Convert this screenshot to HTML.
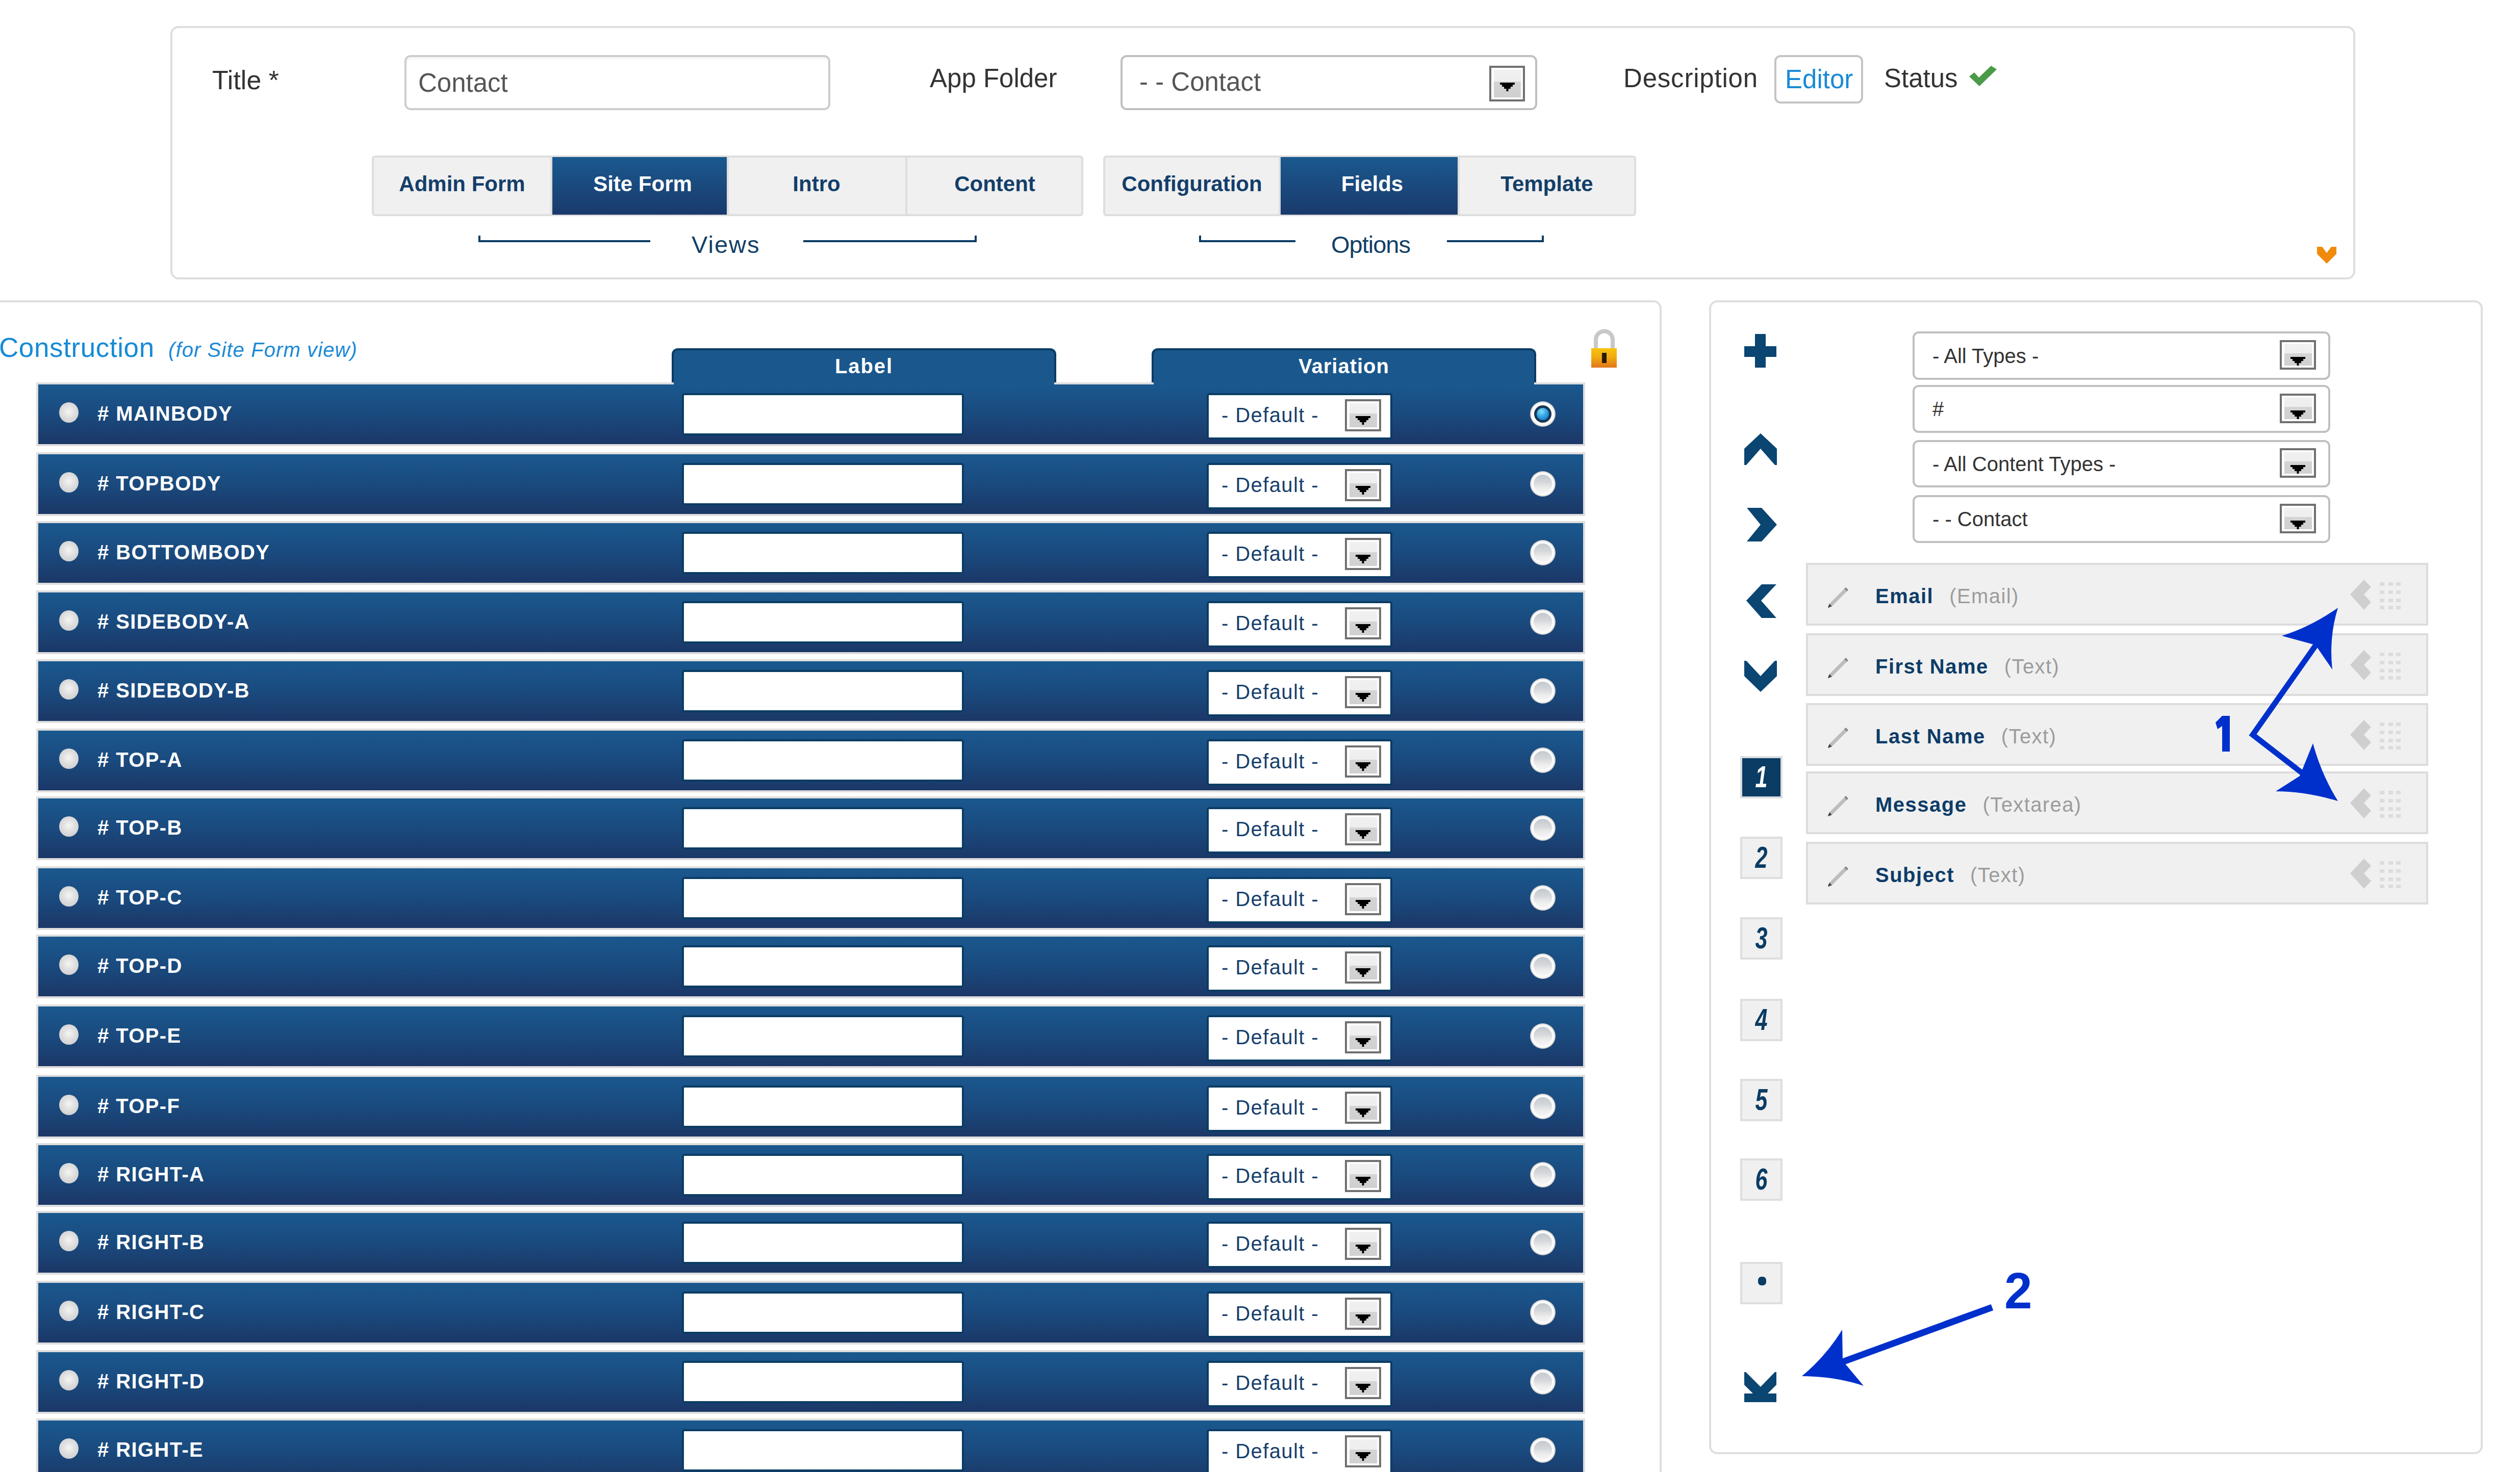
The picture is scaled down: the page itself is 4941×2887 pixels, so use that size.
<!DOCTYPE html>
<html><head><meta charset="utf-8"><title>Form</title>
<style>
html,body{margin:0;padding:0;}
body{width:4941px;height:2887px;overflow:hidden;background:#fff;position:relative;font-family:"Liberation Sans", sans-serif;}
.r{position:absolute;}
.t{position:absolute;white-space:nowrap;line-height:1;}
</style></head><body>

<div class="r" style="left:334px;top:51px;width:4284px;height:497px;border:4px solid #dedede;border-radius:16px;box-sizing:border-box;background:#fff"></div>
<div class="t" style="left:416px;top:131.0px;font-size:52px;color:#333;font-weight:normal;font-style:normal;">Title *</div>
<div class="r" style="left:793px;top:108px;width:835px;height:108px;border:4px solid #cdcdcd;border-radius:12px;box-sizing:border-box;background:#fff;box-shadow:inset 0 4px 4px rgba(0,0,0,0.04)"></div>
<div class="t" style="left:820px;top:136.8px;font-size:51px;color:#555;font-weight:normal;font-style:normal;">Contact</div>
<div class="t" style="left:1823px;top:127.8px;font-size:51px;color:#333;font-weight:normal;font-style:normal;">App Folder</div>
<div class="r" style="left:2197px;top:108px;width:817px;height:108px;border:4px solid #c0c0c0;border-radius:12px;box-sizing:border-box;background:#fff"></div>
<div class="t" style="left:2234px;top:134.8px;font-size:51px;color:#555;font-weight:normal;font-style:normal;">- - Contact</div>
<div class="r" style="left:2920px;top:129px;width:70px;height:70px;border:4px solid #707070;box-sizing:border-box;background:#fdfdfd"></div>
<div class="r" style="left:2929px;top:137px;width:53px;height:54px;background:linear-gradient(#f0f0f0 0%,#eeeeee 43%,#d4d4d4 43%,#d0d0d0 100%)"></div>
<svg class="r" style="left:2940.5px;top:162px" width="29" height="17" viewBox="0 0 29 17"><path d="M0 0H29V4H25V8H21V12H16.5V17H12.5V12H8V8H4V4H0Z" fill="#000"/></svg>
<div class="t" style="left:3183px;top:127.8px;font-size:51px;color:#333;font-weight:normal;font-style:normal;letter-spacing:0.8px">Description</div>
<div class="r" style="left:3479px;top:108px;width:174px;height:95px;border:4px solid #c4c4c4;border-radius:12px;box-sizing:border-box;background:#fff"></div>
<div class="t" style="left:3500px;top:129.8px;font-size:51px;color:#1a8ad6;font-weight:normal;font-style:normal;">Editor</div>
<div class="t" style="left:3694px;top:127.8px;font-size:51px;color:#333;font-weight:normal;font-style:normal;">Status</div>
<svg class="r" style="left:3858px;top:126px" width="60" height="46" viewBox="0 0 60 46"><path d="M3 24 L13 16 L22 26 L46 3 L57 10 L23 43 Z" fill="#4a9a48"/></svg>
<div class="r" style="left:729px;top:305px;width:1395px;height:119px;border:4px solid #dedede;border-radius:6px;box-sizing:border-box;background:#f0f0f0"></div>
<div class="r" style="left:1079px;top:308px;width:4px;height:113px;background:#dedede"></div>
<div class="r" style="left:1425px;top:308px;width:4px;height:113px;background:#dedede"></div>
<div class="r" style="left:1775px;top:308px;width:4px;height:113px;background:#dedede"></div>
<div class="t" style="left:729px;width:354px;text-align:center;top:340.4px;font-size:42px;color:#133e6a;font-weight:bold;font-style:normal;">Admin Form</div>
<div class="r" style="left:1083px;top:308px;width:342px;height:113px;background:linear-gradient(#1a598f,#1a3a6b)"></div>
<div class="t" style="left:1089px;width:342px;text-align:center;top:340.4px;font-size:42px;color:#fff;font-weight:bold;font-style:normal;">Site Form</div>
<div class="t" style="left:1425px;width:352px;text-align:center;top:340.4px;font-size:42px;color:#133e6a;font-weight:bold;font-style:normal;">Intro</div>
<div class="t" style="left:1777px;width:347px;text-align:center;top:340.4px;font-size:42px;color:#133e6a;font-weight:bold;font-style:normal;">Content</div>
<div class="r" style="left:2163px;top:305px;width:1045px;height:119px;border:4px solid #dedede;border-radius:6px;box-sizing:border-box;background:#f0f0f0"></div>
<div class="r" style="left:2507px;top:308px;width:4px;height:113px;background:#dedede"></div>
<div class="r" style="left:2858px;top:308px;width:4px;height:113px;background:#dedede"></div>
<div class="t" style="left:2163px;width:348px;text-align:center;top:340.4px;font-size:42px;color:#133e6a;font-weight:bold;font-style:normal;">Configuration</div>
<div class="r" style="left:2511px;top:308px;width:347px;height:113px;background:linear-gradient(#1a598f,#1a3a6b)"></div>
<div class="t" style="left:2517px;width:347px;text-align:center;top:340.4px;font-size:42px;color:#fff;font-weight:bold;font-style:normal;">Fields</div>
<div class="t" style="left:2858px;width:350px;text-align:center;top:340.4px;font-size:42px;color:#133e6a;font-weight:bold;font-style:normal;">Template</div>
<div class="r" style="left:938px;top:471px;width:337px;height:4px;background:#0a3c64"></div>
<div class="r" style="left:938px;top:462px;width:4px;height:13px;background:#0a3c64"></div>
<div class="r" style="left:1575px;top:471px;width:340px;height:4px;background:#0a3c64"></div>
<div class="r" style="left:1911px;top:462px;width:4px;height:13px;background:#0a3c64"></div>
<div class="t" style="left:1356px;top:456.2px;font-size:47px;color:#123f66;font-weight:normal;font-style:normal;letter-spacing:2px">Views</div>
<div class="r" style="left:2351px;top:471px;width:189px;height:4px;background:#0a3c64"></div>
<div class="r" style="left:2351px;top:462px;width:4px;height:13px;background:#0a3c64"></div>
<div class="r" style="left:2837px;top:471px;width:190px;height:4px;background:#0a3c64"></div>
<div class="r" style="left:3023px;top:462px;width:4px;height:13px;background:#0a3c64"></div>
<div class="t" style="left:2610px;top:456.2px;font-size:47px;color:#123f66;font-weight:normal;font-style:normal;letter-spacing:-1px">Options</div>
<svg class="r" style="left:4541px;top:480px" width="42" height="40" viewBox="0 0 42 40"><path d="M2 4 L12 4 L21 16 L30 4 L40 4 L40 18 L21 37 L2 18 Z" fill="#f08a0c"/></svg>
<div class="r" style="left:-40px;top:589px;width:3298px;height:2411px;border:4px solid #dedede;border-radius:16px;box-sizing:border-box;background:#fff"></div>
<div class="t" style="left:-2px;top:655.1px;font-size:53px;color:#168bd6;font-weight:normal;font-style:normal;letter-spacing:0.6px">Construction</div>
<div class="t" style="left:330px;top:666.1px;font-size:40px;color:#1a8ad6;font-weight:normal;font-style:italic;letter-spacing:1.1px">(for Site Form view)</div>
<div class="r" style="left:1317px;top:683px;width:754px;height:77px;border:4px solid #0a3c64;border-bottom:none;border-radius:12px 12px 0 0;box-sizing:border-box;background:#1a578c"></div>
<div class="t" style="left:1317px;width:754px;text-align:center;top:698.1px;font-size:40px;color:#fff;font-weight:bold;font-style:normal;letter-spacing:1.9px">Label</div>
<div class="r" style="left:2258px;top:683px;width:754px;height:77px;border:4px solid #0a3c64;border-bottom:none;border-radius:12px 12px 0 0;box-sizing:border-box;background:#1a578c"></div>
<div class="t" style="left:2258px;width:754px;text-align:center;top:698.1px;font-size:40px;color:#fff;font-weight:bold;font-style:normal;letter-spacing:1px">Variation</div>
<svg class="r" style="left:3112px;top:640px" width="66" height="90" viewBox="0 0 66 90">
<defs><linearGradient id="lg" x1="0" y1="0" x2="0" y2="1"><stop offset="0" stop-color="#f7c40e"/><stop offset="0.5" stop-color="#f0a812"/><stop offset="1" stop-color="#e2761a"/></linearGradient></defs>
<path d="M13 44 V26 A20.5 20.5 0 0 1 54 26 V44 H46 V26 A12.5 12.5 0 0 0 21 26 V44 Z" fill="#c8c8c8"/>
<rect x="8" y="43" width="50" height="38" fill="url(#lg)"/>
<rect x="29" y="52" width="9" height="20" fill="#2a1a0a"/>
</svg>
<div class="r" style="left:71px;top:750px;width:3037px;height:125px;border:4px solid #dedede;box-sizing:border-box;background:linear-gradient(to bottom,#1a588e 0%,#1a4a7e 50%,#1b3767 100%)"></div>
<div class="r" style="left:1321px;top:750px;width:746px;height:4px;background:#1a588e"></div>
<div class="r" style="left:2262px;top:750px;width:746px;height:4px;background:#1a588e"></div>
<div class="r" style="left:116px;top:789px;width:38px;height:40px;border-radius:50%;background:radial-gradient(circle at 50% 45%,#f4f4f4 0%,#d9d9d9 55%,#c4c8cc 100%);"></div>
<div class="t" style="left:191px;top:791.1px;font-size:40px;color:#fff;font-weight:bold;font-style:normal;letter-spacing:1.4px"># MAINBODY</div>
<div class="r" style="left:1337px;top:771px;width:553px;height:83px;border:4px solid #0a3c64;border-radius:5px;box-sizing:border-box;background:#fff"></div>
<div class="r" style="left:2366px;top:771px;width:364px;height:91px;border:4px solid #0a3c64;border-radius:5px;box-sizing:border-box;background:#fff"></div>
<div class="t" style="left:2395px;top:794.1px;font-size:40px;color:#173f6c;font-weight:normal;font-style:normal;letter-spacing:1.4px">- Default -</div>
<div class="r" style="left:2637px;top:783px;width:71px;height:63px;border:4px solid #707070;box-sizing:border-box;background:#fdfdfd"></div>
<div class="r" style="left:2646px;top:791px;width:54px;height:47px;background:linear-gradient(#f0f0f0 0%,#eeeeee 43%,#d4d4d4 43%,#d0d0d0 100%)"></div>
<svg class="r" style="left:2658.0px;top:816px" width="29" height="17" viewBox="0 0 29 17"><path d="M0 0H29V4H25V8H21V12H16.5V17H12.5V12H8V8H4V4H0Z" fill="#000"/></svg>
<div class="r" style="left:3000px;top:787px;width:50px;height:50px;border-radius:50%;background:radial-gradient(circle,#fafafa 0%,#fafafa 62%,#9a9a9a 76%,#7a8a9a 100%);"></div>
<div class="r" style="left:3008px;top:795px;width:34px;height:34px;border-radius:50%;background:radial-gradient(circle,#1a3550 0%,#1a3550 100%);"></div>
<div class="r" style="left:3013px;top:800px;width:24px;height:24px;border-radius:50%;background:radial-gradient(circle at 40% 30%,#8ee0f0 0%,#40b0e8 35%,#1a88d8 70%,#1a70b8 100%);"></div>
<div class="r" style="left:71px;top:887px;width:3037px;height:125px;border:4px solid #dedede;box-sizing:border-box;background:linear-gradient(to bottom,#1a588e 0%,#1a4a7e 50%,#1b3767 100%)"></div>
<div class="r" style="left:116px;top:926px;width:38px;height:40px;border-radius:50%;background:radial-gradient(circle at 50% 45%,#f4f4f4 0%,#d9d9d9 55%,#c4c8cc 100%);"></div>
<div class="t" style="left:191px;top:928.1px;font-size:40px;color:#fff;font-weight:bold;font-style:normal;letter-spacing:1.4px"># TOPBODY</div>
<div class="r" style="left:1337px;top:908px;width:553px;height:83px;border:4px solid #0a3c64;border-radius:5px;box-sizing:border-box;background:#fff"></div>
<div class="r" style="left:2366px;top:908px;width:364px;height:91px;border:4px solid #0a3c64;border-radius:5px;box-sizing:border-box;background:#fff"></div>
<div class="t" style="left:2395px;top:931.1px;font-size:40px;color:#173f6c;font-weight:normal;font-style:normal;letter-spacing:1.4px">- Default -</div>
<div class="r" style="left:2637px;top:920px;width:71px;height:63px;border:4px solid #707070;box-sizing:border-box;background:#fdfdfd"></div>
<div class="r" style="left:2646px;top:928px;width:54px;height:47px;background:linear-gradient(#f0f0f0 0%,#eeeeee 43%,#d4d4d4 43%,#d0d0d0 100%)"></div>
<svg class="r" style="left:2658.0px;top:953px" width="29" height="17" viewBox="0 0 29 17"><path d="M0 0H29V4H25V8H21V12H16.5V17H12.5V12H8V8H4V4H0Z" fill="#000"/></svg>
<div class="r" style="left:3000px;top:924px;width:50px;height:50px;border-radius:50%;background:radial-gradient(circle,#fafafa 0%,#fafafa 62%,#9a9a9a 76%,#7a8a9a 100%);"></div>
<div class="r" style="left:3007px;top:931px;width:36px;height:36px;border-radius:50%;background:linear-gradient(#c4c9ce 0%,#d4d7da 40%,#eeeeee 75%,#f4f4f4 100%);"></div>
<div class="r" style="left:71px;top:1022px;width:3037px;height:125px;border:4px solid #dedede;box-sizing:border-box;background:linear-gradient(to bottom,#1a588e 0%,#1a4a7e 50%,#1b3767 100%)"></div>
<div class="r" style="left:116px;top:1061px;width:38px;height:40px;border-radius:50%;background:radial-gradient(circle at 50% 45%,#f4f4f4 0%,#d9d9d9 55%,#c4c8cc 100%);"></div>
<div class="t" style="left:191px;top:1063.1px;font-size:40px;color:#fff;font-weight:bold;font-style:normal;letter-spacing:1.4px"># BOTTOMBODY</div>
<div class="r" style="left:1337px;top:1043px;width:553px;height:83px;border:4px solid #0a3c64;border-radius:5px;box-sizing:border-box;background:#fff"></div>
<div class="r" style="left:2366px;top:1043px;width:364px;height:91px;border:4px solid #0a3c64;border-radius:5px;box-sizing:border-box;background:#fff"></div>
<div class="t" style="left:2395px;top:1066.1px;font-size:40px;color:#173f6c;font-weight:normal;font-style:normal;letter-spacing:1.4px">- Default -</div>
<div class="r" style="left:2637px;top:1055px;width:71px;height:63px;border:4px solid #707070;box-sizing:border-box;background:#fdfdfd"></div>
<div class="r" style="left:2646px;top:1063px;width:54px;height:47px;background:linear-gradient(#f0f0f0 0%,#eeeeee 43%,#d4d4d4 43%,#d0d0d0 100%)"></div>
<svg class="r" style="left:2658.0px;top:1088px" width="29" height="17" viewBox="0 0 29 17"><path d="M0 0H29V4H25V8H21V12H16.5V17H12.5V12H8V8H4V4H0Z" fill="#000"/></svg>
<div class="r" style="left:3000px;top:1059px;width:50px;height:50px;border-radius:50%;background:radial-gradient(circle,#fafafa 0%,#fafafa 62%,#9a9a9a 76%,#7a8a9a 100%);"></div>
<div class="r" style="left:3007px;top:1066px;width:36px;height:36px;border-radius:50%;background:linear-gradient(#c4c9ce 0%,#d4d7da 40%,#eeeeee 75%,#f4f4f4 100%);"></div>
<div class="r" style="left:71px;top:1158px;width:3037px;height:125px;border:4px solid #dedede;box-sizing:border-box;background:linear-gradient(to bottom,#1a588e 0%,#1a4a7e 50%,#1b3767 100%)"></div>
<div class="r" style="left:116px;top:1197px;width:38px;height:40px;border-radius:50%;background:radial-gradient(circle at 50% 45%,#f4f4f4 0%,#d9d9d9 55%,#c4c8cc 100%);"></div>
<div class="t" style="left:191px;top:1199.1px;font-size:40px;color:#fff;font-weight:bold;font-style:normal;letter-spacing:1.4px"># SIDEBODY-A</div>
<div class="r" style="left:1337px;top:1179px;width:553px;height:83px;border:4px solid #0a3c64;border-radius:5px;box-sizing:border-box;background:#fff"></div>
<div class="r" style="left:2366px;top:1179px;width:364px;height:91px;border:4px solid #0a3c64;border-radius:5px;box-sizing:border-box;background:#fff"></div>
<div class="t" style="left:2395px;top:1202.1px;font-size:40px;color:#173f6c;font-weight:normal;font-style:normal;letter-spacing:1.4px">- Default -</div>
<div class="r" style="left:2637px;top:1191px;width:71px;height:63px;border:4px solid #707070;box-sizing:border-box;background:#fdfdfd"></div>
<div class="r" style="left:2646px;top:1199px;width:54px;height:47px;background:linear-gradient(#f0f0f0 0%,#eeeeee 43%,#d4d4d4 43%,#d0d0d0 100%)"></div>
<svg class="r" style="left:2658.0px;top:1224px" width="29" height="17" viewBox="0 0 29 17"><path d="M0 0H29V4H25V8H21V12H16.5V17H12.5V12H8V8H4V4H0Z" fill="#000"/></svg>
<div class="r" style="left:3000px;top:1195px;width:50px;height:50px;border-radius:50%;background:radial-gradient(circle,#fafafa 0%,#fafafa 62%,#9a9a9a 76%,#7a8a9a 100%);"></div>
<div class="r" style="left:3007px;top:1202px;width:36px;height:36px;border-radius:50%;background:linear-gradient(#c4c9ce 0%,#d4d7da 40%,#eeeeee 75%,#f4f4f4 100%);"></div>
<div class="r" style="left:71px;top:1293px;width:3037px;height:125px;border:4px solid #dedede;box-sizing:border-box;background:linear-gradient(to bottom,#1a588e 0%,#1a4a7e 50%,#1b3767 100%)"></div>
<div class="r" style="left:116px;top:1332px;width:38px;height:40px;border-radius:50%;background:radial-gradient(circle at 50% 45%,#f4f4f4 0%,#d9d9d9 55%,#c4c8cc 100%);"></div>
<div class="t" style="left:191px;top:1334.1px;font-size:40px;color:#fff;font-weight:bold;font-style:normal;letter-spacing:1.4px"># SIDEBODY-B</div>
<div class="r" style="left:1337px;top:1314px;width:553px;height:83px;border:4px solid #0a3c64;border-radius:5px;box-sizing:border-box;background:#fff"></div>
<div class="r" style="left:2366px;top:1314px;width:364px;height:91px;border:4px solid #0a3c64;border-radius:5px;box-sizing:border-box;background:#fff"></div>
<div class="t" style="left:2395px;top:1337.1px;font-size:40px;color:#173f6c;font-weight:normal;font-style:normal;letter-spacing:1.4px">- Default -</div>
<div class="r" style="left:2637px;top:1326px;width:71px;height:63px;border:4px solid #707070;box-sizing:border-box;background:#fdfdfd"></div>
<div class="r" style="left:2646px;top:1334px;width:54px;height:47px;background:linear-gradient(#f0f0f0 0%,#eeeeee 43%,#d4d4d4 43%,#d0d0d0 100%)"></div>
<svg class="r" style="left:2658.0px;top:1359px" width="29" height="17" viewBox="0 0 29 17"><path d="M0 0H29V4H25V8H21V12H16.5V17H12.5V12H8V8H4V4H0Z" fill="#000"/></svg>
<div class="r" style="left:3000px;top:1330px;width:50px;height:50px;border-radius:50%;background:radial-gradient(circle,#fafafa 0%,#fafafa 62%,#9a9a9a 76%,#7a8a9a 100%);"></div>
<div class="r" style="left:3007px;top:1337px;width:36px;height:36px;border-radius:50%;background:linear-gradient(#c4c9ce 0%,#d4d7da 40%,#eeeeee 75%,#f4f4f4 100%);"></div>
<div class="r" style="left:71px;top:1429px;width:3037px;height:125px;border:4px solid #dedede;box-sizing:border-box;background:linear-gradient(to bottom,#1a588e 0%,#1a4a7e 50%,#1b3767 100%)"></div>
<div class="r" style="left:116px;top:1468px;width:38px;height:40px;border-radius:50%;background:radial-gradient(circle at 50% 45%,#f4f4f4 0%,#d9d9d9 55%,#c4c8cc 100%);"></div>
<div class="t" style="left:191px;top:1470.1px;font-size:40px;color:#fff;font-weight:bold;font-style:normal;letter-spacing:1.4px"># TOP-A</div>
<div class="r" style="left:1337px;top:1450px;width:553px;height:83px;border:4px solid #0a3c64;border-radius:5px;box-sizing:border-box;background:#fff"></div>
<div class="r" style="left:2366px;top:1450px;width:364px;height:91px;border:4px solid #0a3c64;border-radius:5px;box-sizing:border-box;background:#fff"></div>
<div class="t" style="left:2395px;top:1473.1px;font-size:40px;color:#173f6c;font-weight:normal;font-style:normal;letter-spacing:1.4px">- Default -</div>
<div class="r" style="left:2637px;top:1462px;width:71px;height:63px;border:4px solid #707070;box-sizing:border-box;background:#fdfdfd"></div>
<div class="r" style="left:2646px;top:1470px;width:54px;height:47px;background:linear-gradient(#f0f0f0 0%,#eeeeee 43%,#d4d4d4 43%,#d0d0d0 100%)"></div>
<svg class="r" style="left:2658.0px;top:1495px" width="29" height="17" viewBox="0 0 29 17"><path d="M0 0H29V4H25V8H21V12H16.5V17H12.5V12H8V8H4V4H0Z" fill="#000"/></svg>
<div class="r" style="left:3000px;top:1466px;width:50px;height:50px;border-radius:50%;background:radial-gradient(circle,#fafafa 0%,#fafafa 62%,#9a9a9a 76%,#7a8a9a 100%);"></div>
<div class="r" style="left:3007px;top:1473px;width:36px;height:36px;border-radius:50%;background:linear-gradient(#c4c9ce 0%,#d4d7da 40%,#eeeeee 75%,#f4f4f4 100%);"></div>
<div class="r" style="left:71px;top:1562px;width:3037px;height:125px;border:4px solid #dedede;box-sizing:border-box;background:linear-gradient(to bottom,#1a588e 0%,#1a4a7e 50%,#1b3767 100%)"></div>
<div class="r" style="left:116px;top:1601px;width:38px;height:40px;border-radius:50%;background:radial-gradient(circle at 50% 45%,#f4f4f4 0%,#d9d9d9 55%,#c4c8cc 100%);"></div>
<div class="t" style="left:191px;top:1603.1px;font-size:40px;color:#fff;font-weight:bold;font-style:normal;letter-spacing:1.4px"># TOP-B</div>
<div class="r" style="left:1337px;top:1583px;width:553px;height:83px;border:4px solid #0a3c64;border-radius:5px;box-sizing:border-box;background:#fff"></div>
<div class="r" style="left:2366px;top:1583px;width:364px;height:91px;border:4px solid #0a3c64;border-radius:5px;box-sizing:border-box;background:#fff"></div>
<div class="t" style="left:2395px;top:1606.1px;font-size:40px;color:#173f6c;font-weight:normal;font-style:normal;letter-spacing:1.4px">- Default -</div>
<div class="r" style="left:2637px;top:1595px;width:71px;height:63px;border:4px solid #707070;box-sizing:border-box;background:#fdfdfd"></div>
<div class="r" style="left:2646px;top:1603px;width:54px;height:47px;background:linear-gradient(#f0f0f0 0%,#eeeeee 43%,#d4d4d4 43%,#d0d0d0 100%)"></div>
<svg class="r" style="left:2658.0px;top:1628px" width="29" height="17" viewBox="0 0 29 17"><path d="M0 0H29V4H25V8H21V12H16.5V17H12.5V12H8V8H4V4H0Z" fill="#000"/></svg>
<div class="r" style="left:3000px;top:1599px;width:50px;height:50px;border-radius:50%;background:radial-gradient(circle,#fafafa 0%,#fafafa 62%,#9a9a9a 76%,#7a8a9a 100%);"></div>
<div class="r" style="left:3007px;top:1606px;width:36px;height:36px;border-radius:50%;background:linear-gradient(#c4c9ce 0%,#d4d7da 40%,#eeeeee 75%,#f4f4f4 100%);"></div>
<div class="r" style="left:71px;top:1699px;width:3037px;height:125px;border:4px solid #dedede;box-sizing:border-box;background:linear-gradient(to bottom,#1a588e 0%,#1a4a7e 50%,#1b3767 100%)"></div>
<div class="r" style="left:116px;top:1738px;width:38px;height:40px;border-radius:50%;background:radial-gradient(circle at 50% 45%,#f4f4f4 0%,#d9d9d9 55%,#c4c8cc 100%);"></div>
<div class="t" style="left:191px;top:1740.1px;font-size:40px;color:#fff;font-weight:bold;font-style:normal;letter-spacing:1.4px"># TOP-C</div>
<div class="r" style="left:1337px;top:1720px;width:553px;height:83px;border:4px solid #0a3c64;border-radius:5px;box-sizing:border-box;background:#fff"></div>
<div class="r" style="left:2366px;top:1720px;width:364px;height:91px;border:4px solid #0a3c64;border-radius:5px;box-sizing:border-box;background:#fff"></div>
<div class="t" style="left:2395px;top:1743.1px;font-size:40px;color:#173f6c;font-weight:normal;font-style:normal;letter-spacing:1.4px">- Default -</div>
<div class="r" style="left:2637px;top:1732px;width:71px;height:63px;border:4px solid #707070;box-sizing:border-box;background:#fdfdfd"></div>
<div class="r" style="left:2646px;top:1740px;width:54px;height:47px;background:linear-gradient(#f0f0f0 0%,#eeeeee 43%,#d4d4d4 43%,#d0d0d0 100%)"></div>
<svg class="r" style="left:2658.0px;top:1765px" width="29" height="17" viewBox="0 0 29 17"><path d="M0 0H29V4H25V8H21V12H16.5V17H12.5V12H8V8H4V4H0Z" fill="#000"/></svg>
<div class="r" style="left:3000px;top:1736px;width:50px;height:50px;border-radius:50%;background:radial-gradient(circle,#fafafa 0%,#fafafa 62%,#9a9a9a 76%,#7a8a9a 100%);"></div>
<div class="r" style="left:3007px;top:1743px;width:36px;height:36px;border-radius:50%;background:linear-gradient(#c4c9ce 0%,#d4d7da 40%,#eeeeee 75%,#f4f4f4 100%);"></div>
<div class="r" style="left:71px;top:1833px;width:3037px;height:125px;border:4px solid #dedede;box-sizing:border-box;background:linear-gradient(to bottom,#1a588e 0%,#1a4a7e 50%,#1b3767 100%)"></div>
<div class="r" style="left:116px;top:1872px;width:38px;height:40px;border-radius:50%;background:radial-gradient(circle at 50% 45%,#f4f4f4 0%,#d9d9d9 55%,#c4c8cc 100%);"></div>
<div class="t" style="left:191px;top:1874.1px;font-size:40px;color:#fff;font-weight:bold;font-style:normal;letter-spacing:1.4px"># TOP-D</div>
<div class="r" style="left:1337px;top:1854px;width:553px;height:83px;border:4px solid #0a3c64;border-radius:5px;box-sizing:border-box;background:#fff"></div>
<div class="r" style="left:2366px;top:1854px;width:364px;height:91px;border:4px solid #0a3c64;border-radius:5px;box-sizing:border-box;background:#fff"></div>
<div class="t" style="left:2395px;top:1877.1px;font-size:40px;color:#173f6c;font-weight:normal;font-style:normal;letter-spacing:1.4px">- Default -</div>
<div class="r" style="left:2637px;top:1866px;width:71px;height:63px;border:4px solid #707070;box-sizing:border-box;background:#fdfdfd"></div>
<div class="r" style="left:2646px;top:1874px;width:54px;height:47px;background:linear-gradient(#f0f0f0 0%,#eeeeee 43%,#d4d4d4 43%,#d0d0d0 100%)"></div>
<svg class="r" style="left:2658.0px;top:1899px" width="29" height="17" viewBox="0 0 29 17"><path d="M0 0H29V4H25V8H21V12H16.5V17H12.5V12H8V8H4V4H0Z" fill="#000"/></svg>
<div class="r" style="left:3000px;top:1870px;width:50px;height:50px;border-radius:50%;background:radial-gradient(circle,#fafafa 0%,#fafafa 62%,#9a9a9a 76%,#7a8a9a 100%);"></div>
<div class="r" style="left:3007px;top:1877px;width:36px;height:36px;border-radius:50%;background:linear-gradient(#c4c9ce 0%,#d4d7da 40%,#eeeeee 75%,#f4f4f4 100%);"></div>
<div class="r" style="left:71px;top:1970px;width:3037px;height:125px;border:4px solid #dedede;box-sizing:border-box;background:linear-gradient(to bottom,#1a588e 0%,#1a4a7e 50%,#1b3767 100%)"></div>
<div class="r" style="left:116px;top:2009px;width:38px;height:40px;border-radius:50%;background:radial-gradient(circle at 50% 45%,#f4f4f4 0%,#d9d9d9 55%,#c4c8cc 100%);"></div>
<div class="t" style="left:191px;top:2011.1px;font-size:40px;color:#fff;font-weight:bold;font-style:normal;letter-spacing:1.4px"># TOP-E</div>
<div class="r" style="left:1337px;top:1991px;width:553px;height:83px;border:4px solid #0a3c64;border-radius:5px;box-sizing:border-box;background:#fff"></div>
<div class="r" style="left:2366px;top:1991px;width:364px;height:91px;border:4px solid #0a3c64;border-radius:5px;box-sizing:border-box;background:#fff"></div>
<div class="t" style="left:2395px;top:2014.1px;font-size:40px;color:#173f6c;font-weight:normal;font-style:normal;letter-spacing:1.4px">- Default -</div>
<div class="r" style="left:2637px;top:2003px;width:71px;height:63px;border:4px solid #707070;box-sizing:border-box;background:#fdfdfd"></div>
<div class="r" style="left:2646px;top:2011px;width:54px;height:47px;background:linear-gradient(#f0f0f0 0%,#eeeeee 43%,#d4d4d4 43%,#d0d0d0 100%)"></div>
<svg class="r" style="left:2658.0px;top:2036px" width="29" height="17" viewBox="0 0 29 17"><path d="M0 0H29V4H25V8H21V12H16.5V17H12.5V12H8V8H4V4H0Z" fill="#000"/></svg>
<div class="r" style="left:3000px;top:2007px;width:50px;height:50px;border-radius:50%;background:radial-gradient(circle,#fafafa 0%,#fafafa 62%,#9a9a9a 76%,#7a8a9a 100%);"></div>
<div class="r" style="left:3007px;top:2014px;width:36px;height:36px;border-radius:50%;background:linear-gradient(#c4c9ce 0%,#d4d7da 40%,#eeeeee 75%,#f4f4f4 100%);"></div>
<div class="r" style="left:71px;top:2108px;width:3037px;height:125px;border:4px solid #dedede;box-sizing:border-box;background:linear-gradient(to bottom,#1a588e 0%,#1a4a7e 50%,#1b3767 100%)"></div>
<div class="r" style="left:116px;top:2147px;width:38px;height:40px;border-radius:50%;background:radial-gradient(circle at 50% 45%,#f4f4f4 0%,#d9d9d9 55%,#c4c8cc 100%);"></div>
<div class="t" style="left:191px;top:2149.1px;font-size:40px;color:#fff;font-weight:bold;font-style:normal;letter-spacing:1.4px"># TOP-F</div>
<div class="r" style="left:1337px;top:2129px;width:553px;height:83px;border:4px solid #0a3c64;border-radius:5px;box-sizing:border-box;background:#fff"></div>
<div class="r" style="left:2366px;top:2129px;width:364px;height:91px;border:4px solid #0a3c64;border-radius:5px;box-sizing:border-box;background:#fff"></div>
<div class="t" style="left:2395px;top:2152.1px;font-size:40px;color:#173f6c;font-weight:normal;font-style:normal;letter-spacing:1.4px">- Default -</div>
<div class="r" style="left:2637px;top:2141px;width:71px;height:63px;border:4px solid #707070;box-sizing:border-box;background:#fdfdfd"></div>
<div class="r" style="left:2646px;top:2149px;width:54px;height:47px;background:linear-gradient(#f0f0f0 0%,#eeeeee 43%,#d4d4d4 43%,#d0d0d0 100%)"></div>
<svg class="r" style="left:2658.0px;top:2174px" width="29" height="17" viewBox="0 0 29 17"><path d="M0 0H29V4H25V8H21V12H16.5V17H12.5V12H8V8H4V4H0Z" fill="#000"/></svg>
<div class="r" style="left:3000px;top:2145px;width:50px;height:50px;border-radius:50%;background:radial-gradient(circle,#fafafa 0%,#fafafa 62%,#9a9a9a 76%,#7a8a9a 100%);"></div>
<div class="r" style="left:3007px;top:2152px;width:36px;height:36px;border-radius:50%;background:linear-gradient(#c4c9ce 0%,#d4d7da 40%,#eeeeee 75%,#f4f4f4 100%);"></div>
<div class="r" style="left:71px;top:2242px;width:3037px;height:125px;border:4px solid #dedede;box-sizing:border-box;background:linear-gradient(to bottom,#1a588e 0%,#1a4a7e 50%,#1b3767 100%)"></div>
<div class="r" style="left:116px;top:2281px;width:38px;height:40px;border-radius:50%;background:radial-gradient(circle at 50% 45%,#f4f4f4 0%,#d9d9d9 55%,#c4c8cc 100%);"></div>
<div class="t" style="left:191px;top:2283.1px;font-size:40px;color:#fff;font-weight:bold;font-style:normal;letter-spacing:1.4px"># RIGHT-A</div>
<div class="r" style="left:1337px;top:2263px;width:553px;height:83px;border:4px solid #0a3c64;border-radius:5px;box-sizing:border-box;background:#fff"></div>
<div class="r" style="left:2366px;top:2263px;width:364px;height:91px;border:4px solid #0a3c64;border-radius:5px;box-sizing:border-box;background:#fff"></div>
<div class="t" style="left:2395px;top:2286.1px;font-size:40px;color:#173f6c;font-weight:normal;font-style:normal;letter-spacing:1.4px">- Default -</div>
<div class="r" style="left:2637px;top:2275px;width:71px;height:63px;border:4px solid #707070;box-sizing:border-box;background:#fdfdfd"></div>
<div class="r" style="left:2646px;top:2283px;width:54px;height:47px;background:linear-gradient(#f0f0f0 0%,#eeeeee 43%,#d4d4d4 43%,#d0d0d0 100%)"></div>
<svg class="r" style="left:2658.0px;top:2308px" width="29" height="17" viewBox="0 0 29 17"><path d="M0 0H29V4H25V8H21V12H16.5V17H12.5V12H8V8H4V4H0Z" fill="#000"/></svg>
<div class="r" style="left:3000px;top:2279px;width:50px;height:50px;border-radius:50%;background:radial-gradient(circle,#fafafa 0%,#fafafa 62%,#9a9a9a 76%,#7a8a9a 100%);"></div>
<div class="r" style="left:3007px;top:2286px;width:36px;height:36px;border-radius:50%;background:linear-gradient(#c4c9ce 0%,#d4d7da 40%,#eeeeee 75%,#f4f4f4 100%);"></div>
<div class="r" style="left:71px;top:2375px;width:3037px;height:125px;border:4px solid #dedede;box-sizing:border-box;background:linear-gradient(to bottom,#1a588e 0%,#1a4a7e 50%,#1b3767 100%)"></div>
<div class="r" style="left:116px;top:2414px;width:38px;height:40px;border-radius:50%;background:radial-gradient(circle at 50% 45%,#f4f4f4 0%,#d9d9d9 55%,#c4c8cc 100%);"></div>
<div class="t" style="left:191px;top:2416.1px;font-size:40px;color:#fff;font-weight:bold;font-style:normal;letter-spacing:1.4px"># RIGHT-B</div>
<div class="r" style="left:1337px;top:2396px;width:553px;height:83px;border:4px solid #0a3c64;border-radius:5px;box-sizing:border-box;background:#fff"></div>
<div class="r" style="left:2366px;top:2396px;width:364px;height:91px;border:4px solid #0a3c64;border-radius:5px;box-sizing:border-box;background:#fff"></div>
<div class="t" style="left:2395px;top:2419.1px;font-size:40px;color:#173f6c;font-weight:normal;font-style:normal;letter-spacing:1.4px">- Default -</div>
<div class="r" style="left:2637px;top:2408px;width:71px;height:63px;border:4px solid #707070;box-sizing:border-box;background:#fdfdfd"></div>
<div class="r" style="left:2646px;top:2416px;width:54px;height:47px;background:linear-gradient(#f0f0f0 0%,#eeeeee 43%,#d4d4d4 43%,#d0d0d0 100%)"></div>
<svg class="r" style="left:2658.0px;top:2441px" width="29" height="17" viewBox="0 0 29 17"><path d="M0 0H29V4H25V8H21V12H16.5V17H12.5V12H8V8H4V4H0Z" fill="#000"/></svg>
<div class="r" style="left:3000px;top:2412px;width:50px;height:50px;border-radius:50%;background:radial-gradient(circle,#fafafa 0%,#fafafa 62%,#9a9a9a 76%,#7a8a9a 100%);"></div>
<div class="r" style="left:3007px;top:2419px;width:36px;height:36px;border-radius:50%;background:linear-gradient(#c4c9ce 0%,#d4d7da 40%,#eeeeee 75%,#f4f4f4 100%);"></div>
<div class="r" style="left:71px;top:2512px;width:3037px;height:125px;border:4px solid #dedede;box-sizing:border-box;background:linear-gradient(to bottom,#1a588e 0%,#1a4a7e 50%,#1b3767 100%)"></div>
<div class="r" style="left:116px;top:2551px;width:38px;height:40px;border-radius:50%;background:radial-gradient(circle at 50% 45%,#f4f4f4 0%,#d9d9d9 55%,#c4c8cc 100%);"></div>
<div class="t" style="left:191px;top:2553.1px;font-size:40px;color:#fff;font-weight:bold;font-style:normal;letter-spacing:1.4px"># RIGHT-C</div>
<div class="r" style="left:1337px;top:2533px;width:553px;height:83px;border:4px solid #0a3c64;border-radius:5px;box-sizing:border-box;background:#fff"></div>
<div class="r" style="left:2366px;top:2533px;width:364px;height:91px;border:4px solid #0a3c64;border-radius:5px;box-sizing:border-box;background:#fff"></div>
<div class="t" style="left:2395px;top:2556.1px;font-size:40px;color:#173f6c;font-weight:normal;font-style:normal;letter-spacing:1.4px">- Default -</div>
<div class="r" style="left:2637px;top:2545px;width:71px;height:63px;border:4px solid #707070;box-sizing:border-box;background:#fdfdfd"></div>
<div class="r" style="left:2646px;top:2553px;width:54px;height:47px;background:linear-gradient(#f0f0f0 0%,#eeeeee 43%,#d4d4d4 43%,#d0d0d0 100%)"></div>
<svg class="r" style="left:2658.0px;top:2578px" width="29" height="17" viewBox="0 0 29 17"><path d="M0 0H29V4H25V8H21V12H16.5V17H12.5V12H8V8H4V4H0Z" fill="#000"/></svg>
<div class="r" style="left:3000px;top:2549px;width:50px;height:50px;border-radius:50%;background:radial-gradient(circle,#fafafa 0%,#fafafa 62%,#9a9a9a 76%,#7a8a9a 100%);"></div>
<div class="r" style="left:3007px;top:2556px;width:36px;height:36px;border-radius:50%;background:linear-gradient(#c4c9ce 0%,#d4d7da 40%,#eeeeee 75%,#f4f4f4 100%);"></div>
<div class="r" style="left:71px;top:2648px;width:3037px;height:125px;border:4px solid #dedede;box-sizing:border-box;background:linear-gradient(to bottom,#1a588e 0%,#1a4a7e 50%,#1b3767 100%)"></div>
<div class="r" style="left:116px;top:2687px;width:38px;height:40px;border-radius:50%;background:radial-gradient(circle at 50% 45%,#f4f4f4 0%,#d9d9d9 55%,#c4c8cc 100%);"></div>
<div class="t" style="left:191px;top:2689.1px;font-size:40px;color:#fff;font-weight:bold;font-style:normal;letter-spacing:1.4px"># RIGHT-D</div>
<div class="r" style="left:1337px;top:2669px;width:553px;height:83px;border:4px solid #0a3c64;border-radius:5px;box-sizing:border-box;background:#fff"></div>
<div class="r" style="left:2366px;top:2669px;width:364px;height:91px;border:4px solid #0a3c64;border-radius:5px;box-sizing:border-box;background:#fff"></div>
<div class="t" style="left:2395px;top:2692.1px;font-size:40px;color:#173f6c;font-weight:normal;font-style:normal;letter-spacing:1.4px">- Default -</div>
<div class="r" style="left:2637px;top:2681px;width:71px;height:63px;border:4px solid #707070;box-sizing:border-box;background:#fdfdfd"></div>
<div class="r" style="left:2646px;top:2689px;width:54px;height:47px;background:linear-gradient(#f0f0f0 0%,#eeeeee 43%,#d4d4d4 43%,#d0d0d0 100%)"></div>
<svg class="r" style="left:2658.0px;top:2714px" width="29" height="17" viewBox="0 0 29 17"><path d="M0 0H29V4H25V8H21V12H16.5V17H12.5V12H8V8H4V4H0Z" fill="#000"/></svg>
<div class="r" style="left:3000px;top:2685px;width:50px;height:50px;border-radius:50%;background:radial-gradient(circle,#fafafa 0%,#fafafa 62%,#9a9a9a 76%,#7a8a9a 100%);"></div>
<div class="r" style="left:3007px;top:2692px;width:36px;height:36px;border-radius:50%;background:linear-gradient(#c4c9ce 0%,#d4d7da 40%,#eeeeee 75%,#f4f4f4 100%);"></div>
<div class="r" style="left:71px;top:2782px;width:3037px;height:125px;border:4px solid #dedede;box-sizing:border-box;background:linear-gradient(to bottom,#1a588e 0%,#1a4a7e 50%,#1b3767 100%)"></div>
<div class="r" style="left:116px;top:2821px;width:38px;height:40px;border-radius:50%;background:radial-gradient(circle at 50% 45%,#f4f4f4 0%,#d9d9d9 55%,#c4c8cc 100%);"></div>
<div class="t" style="left:191px;top:2823.1px;font-size:40px;color:#fff;font-weight:bold;font-style:normal;letter-spacing:1.4px"># RIGHT-E</div>
<div class="r" style="left:1337px;top:2803px;width:553px;height:83px;border:4px solid #0a3c64;border-radius:5px;box-sizing:border-box;background:#fff"></div>
<div class="r" style="left:2366px;top:2803px;width:364px;height:91px;border:4px solid #0a3c64;border-radius:5px;box-sizing:border-box;background:#fff"></div>
<div class="t" style="left:2395px;top:2826.1px;font-size:40px;color:#173f6c;font-weight:normal;font-style:normal;letter-spacing:1.4px">- Default -</div>
<div class="r" style="left:2637px;top:2815px;width:71px;height:63px;border:4px solid #707070;box-sizing:border-box;background:#fdfdfd"></div>
<div class="r" style="left:2646px;top:2823px;width:54px;height:47px;background:linear-gradient(#f0f0f0 0%,#eeeeee 43%,#d4d4d4 43%,#d0d0d0 100%)"></div>
<svg class="r" style="left:2658.0px;top:2848px" width="29" height="17" viewBox="0 0 29 17"><path d="M0 0H29V4H25V8H21V12H16.5V17H12.5V12H8V8H4V4H0Z" fill="#000"/></svg>
<div class="r" style="left:3000px;top:2819px;width:50px;height:50px;border-radius:50%;background:radial-gradient(circle,#fafafa 0%,#fafafa 62%,#9a9a9a 76%,#7a8a9a 100%);"></div>
<div class="r" style="left:3007px;top:2826px;width:36px;height:36px;border-radius:50%;background:linear-gradient(#c4c9ce 0%,#d4d7da 40%,#eeeeee 75%,#f4f4f4 100%);"></div>
<div class="r" style="left:3351px;top:589px;width:1517px;height:2263px;border:4px solid #dedede;border-radius:16px;box-sizing:border-box;background:#fff"></div>
<svg class="r" style="left:3420px;top:655px" width="64" height="66" viewBox="0 0 64 66"><path d="M21 0H42V24H63V45H42V66H21V45H0V24H21Z" fill="#0b4571"/></svg>
<svg class="r" style="left:3420px;top:850px" width="64" height="62" viewBox="0 0 64 62"><path d="M32 0 L64 30 L64 62 L60 62 L32 30 L4 62 L0 62 L0 30 Z" fill="#0b4571"/></svg>
<svg class="r" style="left:3420px;top:996px" width="64" height="66" viewBox="0 0 64 66"><path d="M5 0 L34 0 L64 33 L34 66 L5 66 L32 33 Z" fill="#0b4571"/></svg>
<svg class="r" style="left:3420px;top:1146px" width="64" height="66" viewBox="0 0 64 66"><path d="M63 0 L34 0 L4 32 L34 66 L63 66 L33 32 Z" fill="#0b4571"/></svg>
<svg class="r" style="left:3420px;top:1296px" width="64" height="62" viewBox="0 0 64 62"><path d="M0 0 L4 0 L32 30 L60 0 L64 0 L64 30 L32 61 L0 30 Z" fill="#0b4571"/></svg>
<div class="r" style="left:3750px;top:650px;width:819px;height:95px;border:4px solid #c0c0c0;border-radius:12px;box-sizing:border-box;background:#fff"></div>
<div class="t" style="left:3789px;top:678.1px;font-size:40px;color:#333;font-weight:normal;font-style:normal;">- All Types -</div>
<div class="r" style="left:4470px;top:667px;width:71px;height:58px;border:4px solid #707070;box-sizing:border-box;background:#fdfdfd"></div>
<div class="r" style="left:4479px;top:675px;width:54px;height:42px;background:linear-gradient(#f0f0f0 0%,#eeeeee 43%,#d4d4d4 43%,#d0d0d0 100%)"></div>
<svg class="r" style="left:4491.0px;top:700px" width="29" height="17" viewBox="0 0 29 17"><path d="M0 0H29V4H25V8H21V12H16.5V17H12.5V12H8V8H4V4H0Z" fill="#000"/></svg>
<div class="r" style="left:3750px;top:755px;width:819px;height:94px;border:4px solid #c0c0c0;border-radius:12px;box-sizing:border-box;background:#fff"></div>
<div class="t" style="left:3789px;top:782.1px;font-size:40px;color:#333;font-weight:normal;font-style:normal;">#</div>
<div class="r" style="left:4470px;top:772px;width:71px;height:58px;border:4px solid #707070;box-sizing:border-box;background:#fdfdfd"></div>
<div class="r" style="left:4479px;top:780px;width:54px;height:42px;background:linear-gradient(#f0f0f0 0%,#eeeeee 43%,#d4d4d4 43%,#d0d0d0 100%)"></div>
<svg class="r" style="left:4491.0px;top:805px" width="29" height="17" viewBox="0 0 29 17"><path d="M0 0H29V4H25V8H21V12H16.5V17H12.5V12H8V8H4V4H0Z" fill="#000"/></svg>
<div class="r" style="left:3750px;top:863px;width:819px;height:93px;border:4px solid #c0c0c0;border-radius:12px;box-sizing:border-box;background:#fff"></div>
<div class="t" style="left:3789px;top:890.1px;font-size:40px;color:#333;font-weight:normal;font-style:normal;">- All Content Types -</div>
<div class="r" style="left:4470px;top:879px;width:71px;height:58px;border:4px solid #707070;box-sizing:border-box;background:#fdfdfd"></div>
<div class="r" style="left:4479px;top:887px;width:54px;height:42px;background:linear-gradient(#f0f0f0 0%,#eeeeee 43%,#d4d4d4 43%,#d0d0d0 100%)"></div>
<svg class="r" style="left:4491.0px;top:912px" width="29" height="17" viewBox="0 0 29 17"><path d="M0 0H29V4H25V8H21V12H16.5V17H12.5V12H8V8H4V4H0Z" fill="#000"/></svg>
<div class="r" style="left:3750px;top:971px;width:819px;height:94px;border:4px solid #c0c0c0;border-radius:12px;box-sizing:border-box;background:#fff"></div>
<div class="t" style="left:3789px;top:998.1px;font-size:40px;color:#333;font-weight:normal;font-style:normal;">- - Contact</div>
<div class="r" style="left:4470px;top:988px;width:71px;height:58px;border:4px solid #707070;box-sizing:border-box;background:#fdfdfd"></div>
<div class="r" style="left:4479px;top:996px;width:54px;height:42px;background:linear-gradient(#f0f0f0 0%,#eeeeee 43%,#d4d4d4 43%,#d0d0d0 100%)"></div>
<svg class="r" style="left:4491.0px;top:1021px" width="29" height="17" viewBox="0 0 29 17"><path d="M0 0H29V4H25V8H21V12H16.5V17H12.5V12H8V8H4V4H0Z" fill="#000"/></svg>
<div class="r" style="left:3541px;top:1104px;width:1220px;height:123px;border:4px solid #dcdcdc;box-sizing:border-box;background:#f0f0f0"></div>
<svg class="r" style="left:3582px;top:1149px" width="44" height="44" viewBox="0 0 44 44"><path d="M37 3 L42 8 L10 40 L5 35 Z" fill="#bdbdbd"/><path d="M37 3 L42 8 L39 11 L34 6 Z" fill="#8a8a8a"/><path d="M5 35 L10 40 L3 43 L2 42 Z" fill="#444"/></svg>
<div class="t" style="left:3677px;top:1149.1px;font-size:40px;color:#0d3c68;font-weight:bold;font-style:normal;letter-spacing:1.5px">Email</div>
<div class="t" style="left:3677px;top:1149.1px;font-size:40px;font-weight:bold;letter-spacing:1.5px;color:transparent">Email<span style="font-weight:normal;color:#9c9c9c;letter-spacing:1.4px;padding-left:6px">&nbsp; (Email)</span></div>
<svg class="r" style="left:4608px;top:1137px" width="42" height="60" viewBox="0 0 42 60"><path d="M27 0 L41 14 L27 29 L41 44 L27 59 L0 29 Z" fill="#cfcfcf"/></svg>
<svg class="r" style="left:4666px;top:1142px" width="44" height="56" viewBox="0 0 44 56"><rect x="0" y="0" width="9" height="7" fill="#dcdcdc"/><rect x="17" y="0" width="9" height="7" fill="#dcdcdc"/><rect x="32" y="0" width="9" height="7" fill="#dcdcdc"/><rect x="0" y="16" width="9" height="7" fill="#dcdcdc"/><rect x="17" y="16" width="9" height="7" fill="#dcdcdc"/><rect x="32" y="16" width="9" height="7" fill="#dcdcdc"/><rect x="0" y="32" width="9" height="7" fill="#dcdcdc"/><rect x="17" y="32" width="9" height="7" fill="#dcdcdc"/><rect x="32" y="32" width="9" height="7" fill="#dcdcdc"/><rect x="0" y="46" width="9" height="7" fill="#dcdcdc"/><rect x="17" y="46" width="9" height="7" fill="#dcdcdc"/><rect x="32" y="46" width="9" height="7" fill="#dcdcdc"/></svg>
<div class="r" style="left:3541px;top:1242px;width:1220px;height:123px;border:4px solid #dcdcdc;box-sizing:border-box;background:#f0f0f0"></div>
<svg class="r" style="left:3582px;top:1287px" width="44" height="44" viewBox="0 0 44 44"><path d="M37 3 L42 8 L10 40 L5 35 Z" fill="#bdbdbd"/><path d="M37 3 L42 8 L39 11 L34 6 Z" fill="#8a8a8a"/><path d="M5 35 L10 40 L3 43 L2 42 Z" fill="#444"/></svg>
<div class="t" style="left:3677px;top:1287.1px;font-size:40px;color:#0d3c68;font-weight:bold;font-style:normal;letter-spacing:1.5px">First Name</div>
<div class="t" style="left:3677px;top:1287.1px;font-size:40px;font-weight:bold;letter-spacing:1.5px;color:transparent">First Name<span style="font-weight:normal;color:#9c9c9c;letter-spacing:1.4px;padding-left:6px">&nbsp; (Text)</span></div>
<svg class="r" style="left:4608px;top:1275px" width="42" height="60" viewBox="0 0 42 60"><path d="M27 0 L41 14 L27 29 L41 44 L27 59 L0 29 Z" fill="#cfcfcf"/></svg>
<svg class="r" style="left:4666px;top:1280px" width="44" height="56" viewBox="0 0 44 56"><rect x="0" y="0" width="9" height="7" fill="#dcdcdc"/><rect x="17" y="0" width="9" height="7" fill="#dcdcdc"/><rect x="32" y="0" width="9" height="7" fill="#dcdcdc"/><rect x="0" y="16" width="9" height="7" fill="#dcdcdc"/><rect x="17" y="16" width="9" height="7" fill="#dcdcdc"/><rect x="32" y="16" width="9" height="7" fill="#dcdcdc"/><rect x="0" y="32" width="9" height="7" fill="#dcdcdc"/><rect x="17" y="32" width="9" height="7" fill="#dcdcdc"/><rect x="32" y="32" width="9" height="7" fill="#dcdcdc"/><rect x="0" y="46" width="9" height="7" fill="#dcdcdc"/><rect x="17" y="46" width="9" height="7" fill="#dcdcdc"/><rect x="32" y="46" width="9" height="7" fill="#dcdcdc"/></svg>
<div class="r" style="left:3541px;top:1379px;width:1220px;height:123px;border:4px solid #dcdcdc;box-sizing:border-box;background:#f0f0f0"></div>
<svg class="r" style="left:3582px;top:1424px" width="44" height="44" viewBox="0 0 44 44"><path d="M37 3 L42 8 L10 40 L5 35 Z" fill="#bdbdbd"/><path d="M37 3 L42 8 L39 11 L34 6 Z" fill="#8a8a8a"/><path d="M5 35 L10 40 L3 43 L2 42 Z" fill="#444"/></svg>
<div class="t" style="left:3677px;top:1424.1px;font-size:40px;color:#0d3c68;font-weight:bold;font-style:normal;letter-spacing:1.5px">Last Name</div>
<div class="t" style="left:3677px;top:1424.1px;font-size:40px;font-weight:bold;letter-spacing:1.5px;color:transparent">Last Name<span style="font-weight:normal;color:#9c9c9c;letter-spacing:1.4px;padding-left:6px">&nbsp; (Text)</span></div>
<svg class="r" style="left:4608px;top:1412px" width="42" height="60" viewBox="0 0 42 60"><path d="M27 0 L41 14 L27 29 L41 44 L27 59 L0 29 Z" fill="#cfcfcf"/></svg>
<svg class="r" style="left:4666px;top:1417px" width="44" height="56" viewBox="0 0 44 56"><rect x="0" y="0" width="9" height="7" fill="#dcdcdc"/><rect x="17" y="0" width="9" height="7" fill="#dcdcdc"/><rect x="32" y="0" width="9" height="7" fill="#dcdcdc"/><rect x="0" y="16" width="9" height="7" fill="#dcdcdc"/><rect x="17" y="16" width="9" height="7" fill="#dcdcdc"/><rect x="32" y="16" width="9" height="7" fill="#dcdcdc"/><rect x="0" y="32" width="9" height="7" fill="#dcdcdc"/><rect x="17" y="32" width="9" height="7" fill="#dcdcdc"/><rect x="32" y="32" width="9" height="7" fill="#dcdcdc"/><rect x="0" y="46" width="9" height="7" fill="#dcdcdc"/><rect x="17" y="46" width="9" height="7" fill="#dcdcdc"/><rect x="32" y="46" width="9" height="7" fill="#dcdcdc"/></svg>
<div class="r" style="left:3541px;top:1513px;width:1220px;height:123px;border:4px solid #dcdcdc;box-sizing:border-box;background:#f0f0f0"></div>
<svg class="r" style="left:3582px;top:1558px" width="44" height="44" viewBox="0 0 44 44"><path d="M37 3 L42 8 L10 40 L5 35 Z" fill="#bdbdbd"/><path d="M37 3 L42 8 L39 11 L34 6 Z" fill="#8a8a8a"/><path d="M5 35 L10 40 L3 43 L2 42 Z" fill="#444"/></svg>
<div class="t" style="left:3677px;top:1558.1px;font-size:40px;color:#0d3c68;font-weight:bold;font-style:normal;letter-spacing:1.5px">Message</div>
<div class="t" style="left:3677px;top:1558.1px;font-size:40px;font-weight:bold;letter-spacing:1.5px;color:transparent">Message<span style="font-weight:normal;color:#9c9c9c;letter-spacing:1.4px;padding-left:6px">&nbsp; (Textarea)</span></div>
<svg class="r" style="left:4608px;top:1546px" width="42" height="60" viewBox="0 0 42 60"><path d="M27 0 L41 14 L27 29 L41 44 L27 59 L0 29 Z" fill="#cfcfcf"/></svg>
<svg class="r" style="left:4666px;top:1551px" width="44" height="56" viewBox="0 0 44 56"><rect x="0" y="0" width="9" height="7" fill="#dcdcdc"/><rect x="17" y="0" width="9" height="7" fill="#dcdcdc"/><rect x="32" y="0" width="9" height="7" fill="#dcdcdc"/><rect x="0" y="16" width="9" height="7" fill="#dcdcdc"/><rect x="17" y="16" width="9" height="7" fill="#dcdcdc"/><rect x="32" y="16" width="9" height="7" fill="#dcdcdc"/><rect x="0" y="32" width="9" height="7" fill="#dcdcdc"/><rect x="17" y="32" width="9" height="7" fill="#dcdcdc"/><rect x="32" y="32" width="9" height="7" fill="#dcdcdc"/><rect x="0" y="46" width="9" height="7" fill="#dcdcdc"/><rect x="17" y="46" width="9" height="7" fill="#dcdcdc"/><rect x="32" y="46" width="9" height="7" fill="#dcdcdc"/></svg>
<div class="r" style="left:3541px;top:1651px;width:1220px;height:123px;border:4px solid #dcdcdc;box-sizing:border-box;background:#f0f0f0"></div>
<svg class="r" style="left:3582px;top:1696px" width="44" height="44" viewBox="0 0 44 44"><path d="M37 3 L42 8 L10 40 L5 35 Z" fill="#bdbdbd"/><path d="M37 3 L42 8 L39 11 L34 6 Z" fill="#8a8a8a"/><path d="M5 35 L10 40 L3 43 L2 42 Z" fill="#444"/></svg>
<div class="t" style="left:3677px;top:1696.1px;font-size:40px;color:#0d3c68;font-weight:bold;font-style:normal;letter-spacing:1.5px">Subject</div>
<div class="t" style="left:3677px;top:1696.1px;font-size:40px;font-weight:bold;letter-spacing:1.5px;color:transparent">Subject<span style="font-weight:normal;color:#9c9c9c;letter-spacing:1.4px;padding-left:6px">&nbsp; (Text)</span></div>
<svg class="r" style="left:4608px;top:1684px" width="42" height="60" viewBox="0 0 42 60"><path d="M27 0 L41 14 L27 29 L41 44 L27 59 L0 29 Z" fill="#cfcfcf"/></svg>
<svg class="r" style="left:4666px;top:1689px" width="44" height="56" viewBox="0 0 44 56"><rect x="0" y="0" width="9" height="7" fill="#dcdcdc"/><rect x="17" y="0" width="9" height="7" fill="#dcdcdc"/><rect x="32" y="0" width="9" height="7" fill="#dcdcdc"/><rect x="0" y="16" width="9" height="7" fill="#dcdcdc"/><rect x="17" y="16" width="9" height="7" fill="#dcdcdc"/><rect x="32" y="16" width="9" height="7" fill="#dcdcdc"/><rect x="0" y="32" width="9" height="7" fill="#dcdcdc"/><rect x="17" y="32" width="9" height="7" fill="#dcdcdc"/><rect x="32" y="32" width="9" height="7" fill="#dcdcdc"/><rect x="0" y="46" width="9" height="7" fill="#dcdcdc"/><rect x="17" y="46" width="9" height="7" fill="#dcdcdc"/><rect x="32" y="46" width="9" height="7" fill="#dcdcdc"/></svg>
<div class="r" style="left:3412px;top:1483px;width:83px;height:83px;border:4px solid #dadde0;box-sizing:border-box;background:#0a3c64"></div>
<div class="t" style="left:3412px;width:83px;text-align:center;top:1494.2px;font-size:60px;font-weight:bold;font-style:italic;color:#fff;transform:scaleX(0.72);">1</div>
<div class="r" style="left:3412px;top:1641px;width:83px;height:83px;border:4px solid #dedede;box-sizing:border-box;background:#f0f0f0"></div>
<div class="t" style="left:3412px;width:83px;text-align:center;top:1652.2px;font-size:60px;font-weight:bold;font-style:italic;color:#0a3c64;transform:scaleX(0.72);">2</div>
<div class="r" style="left:3412px;top:1799px;width:83px;height:83px;border:4px solid #dedede;box-sizing:border-box;background:#f0f0f0"></div>
<div class="t" style="left:3412px;width:83px;text-align:center;top:1810.2px;font-size:60px;font-weight:bold;font-style:italic;color:#0a3c64;transform:scaleX(0.72);">3</div>
<div class="r" style="left:3412px;top:1959px;width:83px;height:83px;border:4px solid #dedede;box-sizing:border-box;background:#f0f0f0"></div>
<div class="t" style="left:3412px;width:83px;text-align:center;top:1970.2px;font-size:60px;font-weight:bold;font-style:italic;color:#0a3c64;transform:scaleX(0.72);">4</div>
<div class="r" style="left:3412px;top:2116px;width:83px;height:83px;border:4px solid #dedede;box-sizing:border-box;background:#f0f0f0"></div>
<div class="t" style="left:3412px;width:83px;text-align:center;top:2127.2px;font-size:60px;font-weight:bold;font-style:italic;color:#0a3c64;transform:scaleX(0.72);">5</div>
<div class="r" style="left:3412px;top:2272px;width:83px;height:83px;border:4px solid #dedede;box-sizing:border-box;background:#f0f0f0"></div>
<div class="t" style="left:3412px;width:83px;text-align:center;top:2283.2px;font-size:60px;font-weight:bold;font-style:italic;color:#0a3c64;transform:scaleX(0.72);">6</div>
<div class="r" style="left:3412px;top:2475px;width:83px;height:83px;border:4px solid #dedede;box-sizing:border-box;background:#f0f0f0"></div>
<div class="r" style="left:3447px;top:2504px;width:16px;height:17px;border-radius:40%;background:#0a3c64"></div>
<svg class="r" style="left:3420px;top:2691px" width="63" height="59" viewBox="0 0 63 59"><path d="M0 0 L3 0 L32 29 L60 0 L63 0 L63 25 L46 42 L63 42 L63 59 L0 59 L0 42 L17 42 L0 25 Z" fill="#0b4571"/></svg>
<svg class="r" style="left:0;top:0" width="4941" height="2887" viewBox="0 0 4941 2887">
<polyline points="4543,1262 4417,1441 4515,1517" fill="none" stroke="#0030cc" stroke-width="11" stroke-linejoin="miter"/>
<path d="M4584 1192 Q4566 1250 4573 1313 L4540 1265 L4474 1247 Q4530 1230 4584 1192 Z" fill="#0030cc"/>
<path d="M4584 1571 Q4520 1552 4462 1552 L4509 1522 L4535 1458 Q4552 1520 4584 1571 Z" fill="#0030cc"/>
<line x1="3906" y1="2564" x2="3610" y2="2672" stroke="#0030cc" stroke-width="13"/>
<path d="M3533 2699 Q3580 2660 3612 2608 L3613 2669 L3654 2718 Q3600 2700 3533 2699 Z" fill="#0030cc"/>
</svg>
<svg class="r" style="left:0;top:0" width="4941" height="2887" viewBox="0 0 4941 2887"><path d="M4357 1404 H4372 V1474 H4357 V1424 L4348 1430 L4344 1417 Z" fill="#0030cc"/></svg>
<div class="t" style="left:3930px;top:2481.3px;font-size:100px;color:#0030cc;font-weight:bold;font-style:normal;transform:scaleX(0.98);transform-origin:left">2</div>
</body></html>
